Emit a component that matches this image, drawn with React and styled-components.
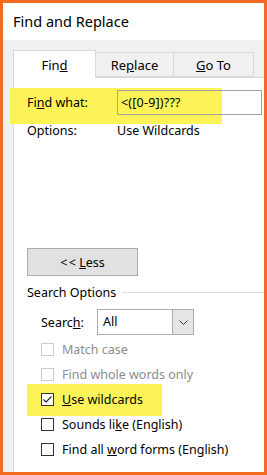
import styled, { createGlobalStyle } from "styled-components";

const Global = createGlobalStyle`
    body {
        margin: 0;
        font-family: "Noto Sans", "Open Sans", sans-serif;
        color: #000;
    }
    * {
        box-sizing: border-box;
    }
`;

const Frame = styled.div`
    width: 267px;
    height: 475px;
    border: 3px solid #f26a1f;
    background: #f0f0f0;
    display: flex;
    flex-direction: column;
    overflow: hidden;
    font-size: 12.5px;
`;

const TitleBar = styled.div`
    height: 37px;
    background: #fff;
    padding-left: 10px;
    line-height: 37px;
    font-size: 14.5px;
`;

const Body = styled.div`
    flex: 1;
    display: flex;
    flex-direction: column;
    padding: 10px 0 0 10px;
`;

const TabStrip = styled.div`
    display: flex;
    align-items: flex-end;
    height: 27px;
`;

const Tab = styled.div`
    width: ${(p) => p.$w}px;
    height: ${(p) => (p.$active ? 28 : 25)}px;
    margin-bottom: ${(p) => (p.$active ? -1 : 0)}px;
    position: relative;
    z-index: ${(p) => (p.$active ? 1 : 0)};
    background: ${(p) => (p.$active ? "#fff" : "#f0f0f0")};
    border: 1px solid #d9d9d9;
    border-bottom: ${(p) => (p.$active ? "none" : "1px solid #d9d9d9")};
    border-left: ${(p) => (p.$active ? "1px solid #d9d9d9" : "none")};
    display: flex;
    align-items: center;
    justify-content: center;
    font-size: 13px;
`;

const Panel = styled.div`
    flex: 1;
    margin-right: -20px;
    background: #fff;
    border-top: 1px solid #d9d9d9;
    border-left: 1px solid #d9d9d9;
    padding-left: 13px;
    display: flex;
    flex-direction: column;
    align-items: flex-start;
`;

const FindRow = styled.div`
    margin: 10px 0 0 -17px;
    height: 36px;
    padding: 2px 0 0 17px;
    display: flex;
    align-items: flex-start;
    background: linear-gradient(#fdf358, #fdf358) no-repeat;
    background-size: 212px 100%;
`;

const Label = styled.span`
    width: ${(p) => p.$w}px;
    line-height: ${(p) => p.$lh || 13}px;
    flex-shrink: 0;
`;

const Input = styled.div`
    width: 145px;
    height: 25px;
    border: 1px solid #a3a3a3;
    padding-left: 3px;
    line-height: 23px;
    letter-spacing: 0.2px;
`;

const OptionsRow = styled.div`
    height: 13px;
    display: flex;
    line-height: 13px;
`;

const Button = styled.div`
    margin-top: 111px;
    width: 111px;
    height: 28px;
    border: 1px solid #adadad;
    background: #e1e1e1;
    display: flex;
    align-items: center;
    justify-content: center;
`;

const Arrow = styled.span`
    margin-right: 1.5px;
`;

const GroupHead = styled.div`
    align-self: stretch;
    margin-top: 8px;
    height: 16px;
    display: flex;
    align-items: center;
    &::after {
        content: "";
        flex: 1;
        height: 1px;
        margin-left: 6px;
        background: #dcdcdc;
    }
`;

const SearchRow = styled.div`
    margin-top: 9px;
    padding-left: 14px;
    display: flex;
    align-items: center;
`;

const Select = styled.div`
    width: 97px;
    height: 26px;
    border: 1px solid #adadad;
    display: flex;
    align-items: stretch;
`;

const SelectValue = styled.span`
    flex: 1;
    padding-left: 5px;
    line-height: 24px;
`;

const SelectArrow = styled.span`
    width: 21px;
    background: #e5e5e5;
    border-left: 1px solid #adadad;
    display: flex;
    align-items: center;
    justify-content: center;
`;

const CheckList = styled.div`
    margin-top: 2px;
    display: flex;
    flex-direction: column;
`;

const CheckRow = styled.div`
    height: 25px;
    width: ${(p) => (p.$hl ? "135px" : "auto")};
    padding-left: 14px;
    display: flex;
    align-items: center;
    color: ${(p) => (p.$disabled ? "#8d8d8d" : "#000")};
    background: ${(p) => (p.$hl ? "#fdf358" : "transparent")};
    box-shadow: ${(p) => (p.$hl ? "0 -3px 0 #fdf358, 0 4px 0 #fdf358" : "none")};
`;

const Box = styled.span`
    width: 13px;
    height: 13px;
    border: 1px solid ${(p) => (p.$disabled ? "#cccccc" : "#333333")};
    background: #fff;
    margin-right: 8px;
    display: flex;
    align-items: center;
    justify-content: center;
`;

const checks = [
    { text: "Match case", disabled: true },
    { text: "Find whole words only", disabled: true },
    { pre: "", key: "U", post: "se wildcards", checked: true, hl: true },
    { pre: "Sounds li", key: "k", post: "e (English)" },
    { pre: "Find all ", key: "w", post: "ord forms (English)" },
];

export default function App() {
    return (
        <>
            <Global />
            <Frame>
                <TitleBar>Find and Replace</TitleBar>
                <Body>
                    <TabStrip>
                        <Tab $w={83} $active>
                            <span>Fin<u>d</u></span>
                        </Tab>
                        <Tab $w={78}>
                            <span>Re<u>p</u>lace</span>
                        </Tab>
                        <Tab $w={80}>
                            <span><u>G</u>o To</span>
                        </Tab>
                    </TabStrip>
                    <Panel>
                        <FindRow>
                            <Label $w={90} $lh={25}>Fi<u>n</u>d what:</Label>
                            <Input>&lt;([0-9])???</Input>
                        </FindRow>
                        <OptionsRow>
                            <Label $w={90}>Options:</Label>
                            <span>Use Wildcards</span>
                        </OptionsRow>
                        <Button>
                            <span><Arrow>&lt;</Arrow>&lt; <u>L</u>ess</span>
                        </Button>
                        <GroupHead>Search Options</GroupHead>
                        <SearchRow>
                            <Label $w={56}>Searc<u>h</u>:</Label>
                            <Select>
                                <SelectValue>All</SelectValue>
                                <SelectArrow>
                                    <svg width="9" height="5" viewBox="0 0 9 5">
                                        <path d="M0.5 0.5 L4.5 4.5 L8.5 0.5" fill="none" stroke="#333" strokeWidth="1" />
                                    </svg>
                                </SelectArrow>
                            </Select>
                        </SearchRow>
                        <CheckList>
                            {checks.map((c, i) => (
                                <CheckRow key={i} $disabled={c.disabled} $hl={c.hl}>
                                    <Box $disabled={c.disabled}>
                                        {c.checked && (
                                            <svg width="11" height="11" viewBox="0 0 11 11">
                                                <path d="M1.5 5.5 L4 8 L9.5 2.5" fill="none" stroke="#222" strokeWidth="1.1" />
                                            </svg>
                                        )}
                                    </Box>
                                    {c.text ? (
                                        <span>{c.text}</span>
                                    ) : (
                                        <span>
                                            {c.pre}
                                            <u>{c.key}</u>
                                            {c.post}
                                        </span>
                                    )}
                                </CheckRow>
                            ))}
                        </CheckList>
                    </Panel>
                </Body>
            </Frame>
        </>
    );
}
